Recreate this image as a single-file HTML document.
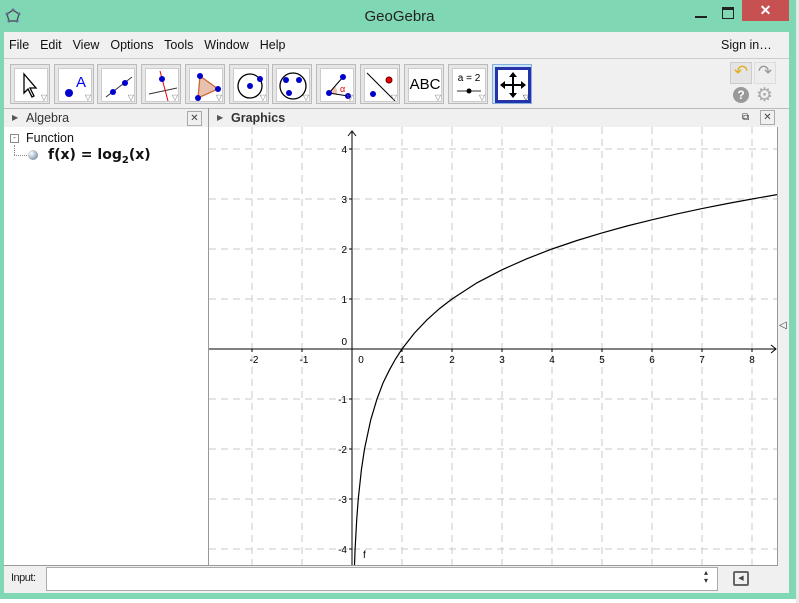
<!DOCTYPE html>
<html><head><meta charset="utf-8"><style>
body{margin:0;width:799px;height:603px;overflow:hidden;background:#fff;font-family:"Liberation Sans",sans-serif;position:relative}
.a{position:absolute}
.btn{position:absolute;top:64px;width:38px;height:38px;background:#e6e6e6;border:1px solid #bbb}
.btn .in{position:absolute;left:3px;top:3px;width:32px;height:32px;background:#fff;border:1px solid #ccc}
.tri{position:absolute;right:2px;bottom:1px;font-size:8px;color:#777}
</style></head><body>
<div class="a" style="left:0;top:0;width:796px;height:599px;background:#80d7b3"></div>
<div class="a" style="left:796px;top:0;width:3px;height:603px;background:#e8e8e8"></div>
<div class="a" style="left:30px;top:599px;width:680px;height:4px;background:#fff"></div>
<svg class="a" style="left:5px;top:8px" width="16" height="16"><polygon points="8,2 14,6 12,13 4,13 2,6" fill="none" stroke="#444" stroke-width="1.2"/><circle cx="8" cy="2" r="1.5" fill="#669"/><circle cx="14" cy="6" r="1.5" fill="#669"/><circle cx="12" cy="13" r="1.5" fill="#669"/><circle cx="4" cy="13" r="1.5" fill="#669"/><circle cx="2" cy="6" r="1.5" fill="#669"/></svg>
<div class="a" style="left:0;width:799px;top:8px;text-align:center;font-size:15px;color:#222">GeoGebra</div>
<div class="a" style="left:695px;top:16px;width:12px;height:2px;background:#222"></div>
<div class="a" style="left:722px;top:7px;width:10px;height:8px;border:1.5px solid #222;border-top-width:3px"></div>
<div class="a" style="left:742px;top:0;width:47px;height:21px;background:#c75050;color:#fff;text-align:center;font-size:14px;font-weight:bold;line-height:21px">✕</div>
<div class="a" style="left:4px;top:32px;width:785px;height:561px;background:#f0f0f0"></div>
<div class="a" style="left:9px;top:38px;font-size:12.5px;color:#111;word-spacing:2px">File&nbsp; Edit&nbsp; View&nbsp; Options&nbsp; Tools&nbsp; Window&nbsp; Help</div>
<div class="a" style="left:721px;top:38px;font-size:12.5px;color:#111">Sign in…</div>
<div class="a" style="left:4px;top:58px;width:785px;height:1px;background:#ccc"></div>
<div class="a" style="left:4px;top:108px;width:785px;height:1px;background:#bbb"></div>

<div class="btn" style="left:10px"><div class="in"><svg width="32" height="32"><path d="M9,5 L9,24 L13,20 L17,28 L19,27 L15,19 L21,19 Z" fill="#fff" stroke="#000" stroke-width="1.3"/></svg></div><span class="tri">▽</span></div>
<div class="btn" style="left:54px"><div class="in"><svg width="32" height="32"><circle cx="10" cy="24" r="4" fill="#00c"/><text x="17" y="18" font-size="15" fill="#00f" font-family="Liberation Sans">A</text></svg></div><span class="tri">▽</span></div>
<div class="btn" style="left:97px"><div class="in"><svg width="32" height="32"><line x1="4" y1="28" x2="30" y2="8" stroke="#333"/><circle cx="11" cy="23" r="3" fill="#00c"/><circle cx="23" cy="14" r="3" fill="#00c"/></svg></div><span class="tri">▽</span></div>
<div class="btn" style="left:141px"><div class="in"><svg width="32" height="32"><line x1="3" y1="25" x2="31" y2="19" stroke="#333"/><line x1="14" y1="2" x2="22" y2="32" stroke="#e00"/><circle cx="16" cy="10" r="3" fill="#00c"/></svg></div><span class="tri">▽</span></div>
<div class="btn" style="left:185px"><div class="in"><svg width="32" height="32"><polygon points="10,7 28,20 8,29" fill="#e8c0b0" stroke="#c63" stroke-width="1.3"/><circle cx="10" cy="7" r="3" fill="#00c"/><circle cx="28" cy="20" r="3" fill="#00c"/><circle cx="8" cy="29" r="3" fill="#00c"/></svg></div><span class="tri">▽</span></div>
<div class="btn" style="left:229px"><div class="in"><svg width="32" height="32"><circle cx="16" cy="17" r="12" fill="none" stroke="#000" stroke-width="1.3"/><circle cx="16" cy="17" r="3" fill="#00c"/><circle cx="26" cy="10" r="3" fill="#00c"/></svg></div><span class="tri">▽</span></div>
<div class="btn" style="left:272px"><div class="in"><svg width="32" height="32"><circle cx="16" cy="17" r="13" fill="none" stroke="#000" stroke-width="1.3"/><circle cx="9" cy="11" r="3" fill="#00c"/><circle cx="22" cy="11" r="3" fill="#00c"/><circle cx="12" cy="24" r="3" fill="#00c"/></svg></div><span class="tri">▽</span></div>
<div class="btn" style="left:316px"><div class="in"><svg width="32" height="32"><path d="M8,24 L16,26 A12,12 0 0 0 14,17 Z" fill="#f0c0b0"/><line x1="8" y1="24" x2="22" y2="8" stroke="#000"/><line x1="8" y1="24" x2="27" y2="27" stroke="#000"/><text x="19" y="23" font-size="9" fill="#e00">α</text><circle cx="8" cy="24" r="3" fill="#00c"/><circle cx="22" cy="8" r="3" fill="#00c"/><circle cx="27" cy="27" r="3" fill="#00c"/></svg></div><span class="tri">▽</span></div>
<div class="btn" style="left:360px"><div class="in"><svg width="32" height="32"><line x1="2" y1="4" x2="30" y2="32" stroke="#000"/><circle cx="8" cy="25" r="3" fill="#00c"/><circle cx="24" cy="11" r="3" fill="#e00" stroke="#600"/></svg></div><span class="tri">▽</span></div>
<div class="btn" style="left:404px"><div class="in"><div style="font-size:15px;text-align:center;line-height:32px;color:#000">ABC</div></div><span class="tri">▽</span></div>
<div class="btn" style="left:448px"><div class="in"><div style="font-size:10px;text-align:center;margin-top:4px">a = 2</div><svg width="32" height="12" style="position:absolute;top:18px;left:0"><line x1="4" y1="4" x2="28" y2="4" stroke="#333"/><circle cx="16" cy="4" r="2.5" fill="#000"/></svg></div><span class="tri">▽</span></div>
<div class="btn" style="left:492px;background:#cde4f7;border-color:#7fb1e0"><div class="in" style="left:2px;top:2px;width:30px;height:30px;border:3px solid #2633a8"><svg width="30" height="30"><path d="M15,3 L15,27 M3,15 L27,15" stroke="#000" stroke-width="2"/><polygon points="15,2 11,7 19,7" /><polygon points="15,28 11,23 19,23"/><polygon points="2,15 7,11 7,19"/><polygon points="28,15 23,11 23,19"/></svg></div><span class="tri" style="color:#333">▽</span></div>

<div class="a" style="left:730px;top:62px;width:20px;height:20px;background:#e4e4e4;border:1px solid #ccc;color:#e0b020;font-size:17px;line-height:18px;text-align:center">↶</div>
<div class="a" style="left:754px;top:62px;width:20px;height:20px;background:#eee;border:1px solid #ddd;color:#999;font-size:17px;line-height:18px;text-align:center">↷</div>
<div class="a" style="left:733px;top:87px;width:16px;height:16px;border-radius:50%;background:#999;color:#fff;font-size:12px;font-weight:bold;text-align:center;line-height:16px">?</div>
<div class="a" style="left:756px;top:84px;color:#aaa;font-size:19px">⚙</div>

<div class="a" style="left:12px;top:113px;font-size:8px;color:#555">▶</div>
<div class="a" style="left:26px;top:111px;font-size:12.5px;color:#333">Algebra</div>
<div class="a" style="left:187px;top:111px;width:13px;height:13px;border:1px solid #aaa;font-size:10px;text-align:center;line-height:13px;color:#444">✕</div>
<div class="a" style="left:208px;top:108px;width:1px;height:457px;background:#999"></div>
<div class="a" style="left:217px;top:113px;font-size:8px;color:#555">▶</div>
<div class="a" style="left:231px;top:111px;font-size:12.5px;font-weight:bold;color:#333">Graphics</div>
<div class="a" style="left:742px;top:112px;font-size:10px;color:#333">⧉</div>
<div class="a" style="left:760px;top:110px;width:13px;height:13px;border:1px solid #aaa;font-size:10px;text-align:center;line-height:13px;color:#444">✕</div>

<div class="a" style="left:4px;top:127px;width:204px;height:438px;background:#fff"></div>
<div class="a" style="left:10px;top:134px;width:7px;height:7px;border:1px solid #888;font-size:8px;line-height:6px;text-align:center;color:#333">-</div>
<div class="a" style="left:26px;top:131px;font-size:12.5px;color:#111">Function</div>
<div class="a" style="left:14px;top:145px;width:0;height:10px;border-left:1px dotted #888"></div>
<div class="a" style="left:14px;top:155px;width:13px;border-top:1px dotted #888"></div>
<div class="a" style="left:28px;top:150px;width:10px;height:10px;border-radius:50%;background:radial-gradient(circle at 35% 35%,#fff,#9ab 60%,#468)"></div>
<div class="a" style="left:48px;top:147px;font-size:14px;font-weight:bold;font-family:'DejaVu Sans',sans-serif;color:#111">f(x) = log<sub style="font-size:10px">2</sub>(x)</div>

<svg class="a" style="left:209px;top:127px" width="568" height="438">
<rect width="568" height="438" fill="#fff"/>
<g transform="translate(-209,-127)" font-family="Liberation Sans" font-size="10" fill="#000">
<g stroke="#c8c8c8" stroke-dasharray="7,5" stroke-width="1">
<line x1="252" y1="127" x2="252" y2="565"/><line x1="302" y1="127" x2="302" y2="565"/>
<line x1="402" y1="127" x2="402" y2="565"/><line x1="452" y1="127" x2="452" y2="565"/>
<line x1="502" y1="127" x2="502" y2="565"/><line x1="552" y1="127" x2="552" y2="565"/>
<line x1="602" y1="127" x2="602" y2="565"/><line x1="652" y1="127" x2="652" y2="565"/>
<line x1="702" y1="127" x2="702" y2="565"/><line x1="752" y1="127" x2="752" y2="565"/>
<line x1="209" y1="149" x2="777" y2="149"/><line x1="209" y1="199" x2="777" y2="199"/>
<line x1="209" y1="249" x2="777" y2="249"/><line x1="209" y1="299" x2="777" y2="299"/>
<line x1="209" y1="399" x2="777" y2="399"/><line x1="209" y1="449" x2="777" y2="449"/>
<line x1="209" y1="499" x2="777" y2="499"/><line x1="209" y1="549" x2="777" y2="549"/>
</g>
<line x1="209" y1="349" x2="776" y2="349" stroke="#000"/>
<path d="M771,345 L776,349 L771,353" fill="none" stroke="#000"/>
<line x1="352" y1="131" x2="352" y2="565" stroke="#000"/>
<path d="M348,136 L352,131 L356,136" fill="none" stroke="#000"/>
<g stroke="#000"><line x1="252" y1="349" x2="252" y2="352"/><line x1="302" y1="349" x2="302" y2="352"/><line x1="402" y1="349" x2="402" y2="352"/><line x1="452" y1="349" x2="452" y2="352"/><line x1="502" y1="349" x2="502" y2="352"/><line x1="552" y1="349" x2="552" y2="352"/><line x1="602" y1="349" x2="602" y2="352"/><line x1="652" y1="349" x2="652" y2="352"/><line x1="702" y1="349" x2="702" y2="352"/><line x1="752" y1="349" x2="752" y2="352"/>
<line x1="349" y1="149" x2="352" y2="149"/><line x1="349" y1="199" x2="352" y2="199"/><line x1="349" y1="249" x2="352" y2="249"/><line x1="349" y1="299" x2="352" y2="299"/><line x1="349" y1="399" x2="352" y2="399"/><line x1="349" y1="449" x2="352" y2="449"/><line x1="349" y1="499" x2="352" y2="499"/><line x1="349" y1="549" x2="352" y2="549"/></g>
<g text-anchor="middle"><text x="254" y="363">-2</text><text x="304" y="363">-1</text><text x="361" y="363">0</text><text x="402" y="363">1</text><text x="452" y="363">2</text><text x="502" y="363">3</text><text x="552" y="363">4</text><text x="602" y="363">5</text><text x="652" y="363">6</text><text x="702" y="363">7</text><text x="752" y="363">8</text></g>
<g text-anchor="end"><text x="347" y="153">4</text><text x="347" y="203">3</text><text x="347" y="253">2</text><text x="347" y="303">1</text><text x="347" y="345">0</text><text x="347" y="403">-1</text><text x="347" y="453">-2</text><text x="347" y="503">-3</text><text x="347" y="553">-4</text></g>
<text x="363" y="558">f</text>
<polyline fill="none" stroke="#000" stroke-width="1.2" points="354.5,565 355.1,549 356.7,519.8 358.25,499 361.4,469.8 364.5,449 370.75,419.8 377,399 383,383 389.5,369.8 395.5,359 402,349 414.5,333 427,319.8 439.5,308.6 452,299 477,282.8 502,269.8 527,258.7 552,249 577,240.5 602,232.9 627,226 652,219.8 677,213.9 702,208.6 727,203.6 752,199 777,194.6"/>
</g></svg>
<div class="a" style="left:777px;top:127px;width:1px;height:438px;background:#999"></div>
<div class="a" style="left:779px;top:320px;font-size:10px;color:#333">◁</div>
<div class="a" style="left:4px;top:565px;width:774px;height:1px;background:#999"></div>

<div class="a" style="left:11px;top:572px;font-size:11px;color:#222;letter-spacing:-0.5px">Input:</div>
<div class="a" style="left:46px;top:567px;width:670px;height:22px;background:#fff;border:1px solid #aaa"></div>
<div class="a" style="left:704px;top:569px;font-size:8px;line-height:8px;color:#333">▴<br>▾</div>
<div class="a" style="left:733px;top:571px;width:12px;height:11px;border:2px solid #666;border-radius:2px;font-size:7px;text-align:center;line-height:11px;color:#444">◀</div>
</body></html>
